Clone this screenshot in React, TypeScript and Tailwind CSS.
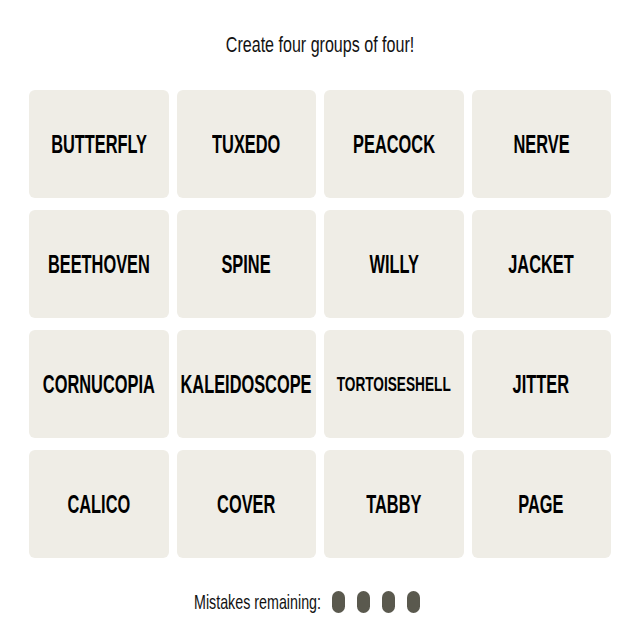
const words = [
  "BUTTERFLY", "TUXEDO", "PEACOCK", "NERVE",
  "BEETHOVEN", "SPINE", "WILLY", "JACKET",
  "CORNUCOPIA", "KALEIDOSCOPE", "TORTOISESHELL", "JITTER",
  "CALICO", "COVER", "TABBY", "PAGE",
];

export default function App() {
  return (
    <div className="w-[640px] h-[640px] bg-white flex flex-col items-center font-['Liberation_Sans',Arial,sans-serif]">
      <div className="h-[90px] flex items-center justify-center pb-[2px]">
        <span className="inline-block whitespace-nowrap text-[22px] text-[#121212] scale-x-[0.73]">
          Create four groups of four!
        </span>
      </div>
      <div className="w-full px-[29px] grid grid-cols-4 gap-x-2 gap-y-3">
        {words.map((w) => (
          <div
            key={w}
            className="h-[108px] rounded-md bg-[#efede6] flex items-center justify-center"
          >
            <span
              className={
                w === "TORTOISESHELL"
                  ? "inline-block whitespace-nowrap font-bold text-[21px] text-black scale-x-[0.65]"
                  : "inline-block whitespace-nowrap font-bold text-[26px] text-black scale-x-[0.63]"
              }
            >
              {w}
            </span>
          </div>
        ))}
      </div>
      <div className="mt-[28px] w-full flex justify-center pr-[27px]">
        <div className="flex items-center gap-[10px]">
          <span className="inline-block w-[128px]">
            <span className="inline-block whitespace-nowrap origin-left text-[21px] text-[#121212] scale-x-[0.68]">
              Mistakes remaining:
            </span>
          </span>
          <div className="flex gap-3">
            <span className="w-[13px] h-[22px] rounded-full bg-[#5a594e]" />
            <span className="w-[13px] h-[22px] rounded-full bg-[#5a594e]" />
            <span className="w-[13px] h-[22px] rounded-full bg-[#5a594e]" />
            <span className="w-[13px] h-[22px] rounded-full bg-[#5a594e]" />
          </div>
        </div>
      </div>
    </div>
  );
}
